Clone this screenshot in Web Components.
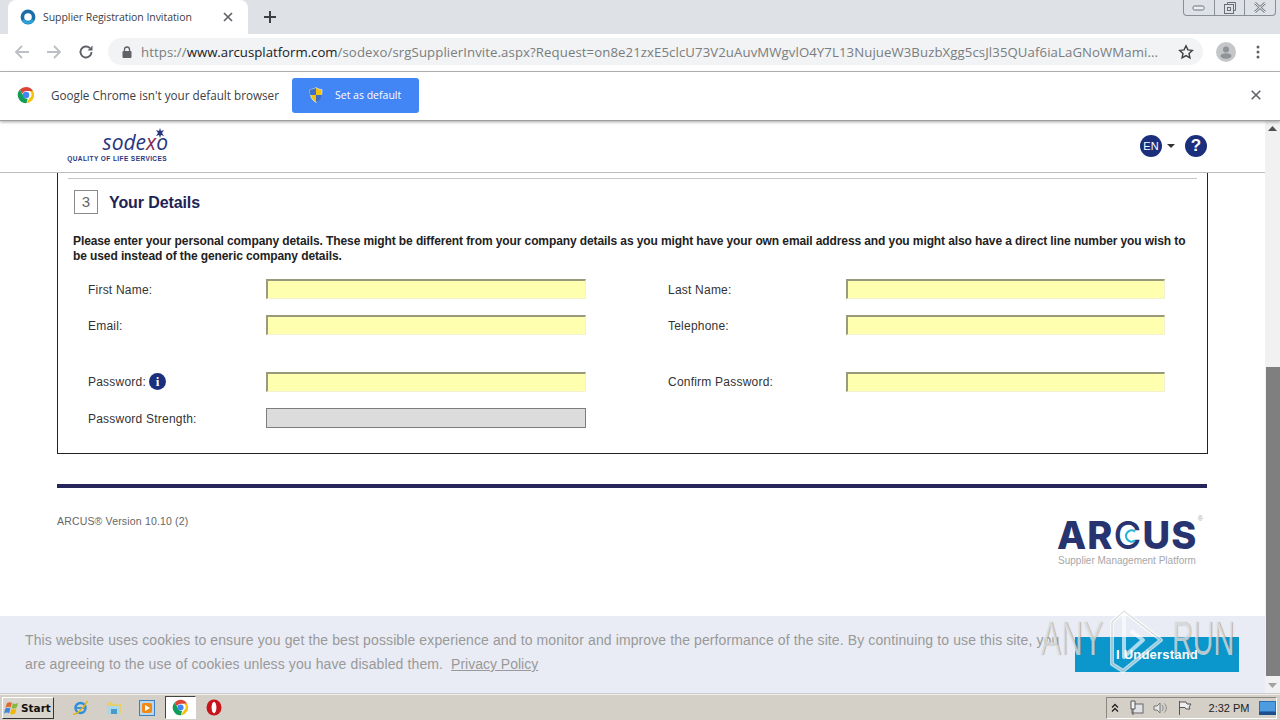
<!DOCTYPE html>
<html lang="en">
<head>
<meta charset="utf-8">
<title>Supplier Registration Invitation</title>
<style>
  html, body { margin: 0; height: 720px; overflow: hidden; background: #fff; }
  body { display: flex; flex-direction: column; font-family: "Liberation Sans", Arial, sans-serif; }
</style>
</head>
<body>
<chrome-tabs></chrome-tabs>
<chrome-toolbar></chrome-toolbar>
<chrome-infobar></chrome-infobar>
<page-view>
  <site-header></site-header>
  <details-panel>
    <form-field label="First Name:"></form-field>
    <form-field label="Last Name:"></form-field>
    <form-field label="Email:"></form-field>
    <form-field label="Telephone:"></form-field>
    <form-field label="Password:" info class="gap"></form-field>
    <form-field label="Confirm Password:" class="gap"></form-field>
    <form-field label="Password Strength:" meter></form-field>
  </details-panel>
  <site-footer></site-footer>
  <cookie-bar></cookie-bar>
</page-view>
<win-taskbar></win-taskbar>

<script>
const chromeLogo = `<svg viewBox="0 0 20 20" width="18" height="18">
  <path d="M10 1a9 9 0 0 1 7.8 4.5H10a4.5 4.5 0 0 0-4.2 3L3.2 4A9 9 0 0 1 10 1z" fill="#db4437"/>
  <path d="M17.8 5.5A9 9 0 0 1 10.6 19l3.3-5.6a4.5 4.5 0 0 0 0-7.9z" fill="#f4c20d"/>
  <path d="M10.6 19A9 9 0 0 1 3.2 4l3.4 6.2a4.5 4.5 0 0 0 5.2 3.9z" fill="#0f9d58"/>
  <circle cx="10" cy="10" r="3.6" fill="#4285f4"/></svg>`;

class ChromeTabs extends HTMLElement {
  constructor() {
    super();
    this.attachShadow({ mode: 'open' });
    this.shadowRoot.innerHTML = `
      <style>
        :host { display: flex; align-items: flex-end; height: 34px; background: #dee1e6; flex: none; padding-left: 8px; position: relative; }
        .tab { display: flex; align-items: center; width: 240px; height: 34px; box-sizing: border-box; background: #fff; border-radius: 8px 8px 0 0; padding: 0 15px 1px 12px; font: 10.5px "Open Sans", sans-serif; color: #3c4043; }
        .tab span { flex: 1; margin-left: 7px; letter-spacing: -.06px; }
        .new { width: 44px; display: flex; justify-content: center; align-self: center; }
        .win { position: absolute; right: 4px; top: 0; display: flex; height: 16px; box-sizing: border-box; width: 93px; border: 1px solid #8a8f96; border-top: 0; border-radius: 0 0 4px 4px; }
        .win i { flex: 1; display: flex; align-items: center; justify-content: center; border-left: 1px solid #8a8f96; }
        .win i:first-child { border-left: 0; }
      </style>
      <div class="tab">
        <svg width="16" height="16" viewBox="0 0 16 16"><circle cx="8" cy="8" r="5.6" fill="none" stroke="#1a6ea8" stroke-width="3.6"/><path d="M3 11a6 6 0 0 0 10 0" fill="none" stroke="#29a5d8" stroke-width="2.4"/></svg>
        <span>Supplier Registration Invitation</span>
        <svg width="10" height="10" viewBox="0 0 10 10"><path d="M1 1l8 8M9 1l-8 8" stroke="#5f6368" stroke-width="1.7"/></svg>
      </div>
      <div class="new"><svg width="14" height="14" viewBox="0 0 14 14"><path d="M7 1v12M1 7h12" stroke="#3c4043" stroke-width="2"/></svg></div>
      <div class="win">
        <i><svg width="14" height="8" viewBox="0 0 14 8"><rect x="1" y="2" width="11" height="4" rx="1.5" fill="#eceef1" stroke="#6c7076"/></svg></i>
        <i><svg width="14" height="14" viewBox="0 0 14 14"><path d="M4.5 3.5v-2h8v8h-2" fill="none" stroke="#6c7076"/><rect x="1.5" y="3.5" width="9" height="9" fill="none" stroke="#6c7076"/><rect x="4.5" y="6.5" width="3" height="3" fill="none" stroke="#6c7076"/></svg></i>
        <i><svg width="14" height="12" viewBox="0 0 14 12"><path d="M2 1l10 9M12 1L2 10" stroke="#7b8086" stroke-width="2.5"/><path d="M2 1l10 9M12 1L2 10" stroke="#eceef1" stroke-width="1"/></svg></i>
      </div>`;
  }
}

class ChromeToolbar extends HTMLElement {
  constructor() {
    super();
    this.attachShadow({ mode: 'open' });
    this.shadowRoot.innerHTML = `
      <style>
        :host { display: flex; align-items: center; height: 38px; box-sizing: border-box; flex: none; background: #fff; border-bottom: 1px solid #b8b9ba; padding: 0 0 2px 14px; }
        .nav { display: flex; gap: 16px; align-items: center; width: 94px; }
        .omni { display: flex; align-items: center; width: 1095px; height: 27px; box-sizing: border-box; background: #f1f3f4; border-radius: 14px; padding: 0 9px 0 14px; font: 13.2px "Open Sans", sans-serif; color: #7a7d80; white-space: nowrap; }
        .url { flex: 1; min-width: 0; margin: 0 19px 0 9px; overflow: hidden; letter-spacing: .09px; }
        .url b { font-weight: 400; color: #202124; letter-spacing: 0; }
        .tools { display: flex; align-items: center; margin-left: 13px; gap: 20px; }
        .avatar { width: 20px; height: 20px; border-radius: 50%; background: #c4c6c8; display: flex; }
      </style>
      <div class="nav">
        <svg width="16" height="16" viewBox="0 0 16 16"><path d="M15 8H2M8 2L2 8l6 6" fill="none" stroke="#bcbfc3" stroke-width="1.8"/></svg>
        <svg width="16" height="16" viewBox="0 0 16 16"><path d="M1 8h13M8 2l6 6-6 6" fill="none" stroke="#bcbfc3" stroke-width="1.8"/></svg>
        <svg width="16" height="16" viewBox="0 0 16 16"><path d="M13.5 8A5.5 5.5 0 1 1 11.8 4" fill="none" stroke="#5f6368" stroke-width="1.9"/><path d="M14.5 1.5v5h-5z" fill="#5f6368"/></svg>
      </div>
      <div class="omni">
        <svg width="10" height="12" viewBox="0 0 10 12"><path d="M2.5 5V3.5a2.5 2.5 0 0 1 5 0V5" fill="none" stroke="#5f6368" stroke-width="1.3"/><rect x=".5" y="5" width="9" height="7" rx="1" fill="#5f6368"/></svg>
        <div class="url">https://<b>www.arcusplatform.com</b>/sodexo/srgSupplierInvite.aspx?Request=on8e21zxE5clcU73V2uAuvMWgvlO4Y7L13NujueW3BuzbXgg5csJl35QUaf6iaLaGNoWMami...</div>
        <svg width="16" height="16" viewBox="0 0 16 16"><path d="M8 1.8l1.9 4.1 4.4.5-3.3 3 .9 4.4L8 11.6l-3.9 2.2.9-4.4-3.3-3 4.4-.5z" fill="none" stroke="#3c4043" stroke-width="1.4"/></svg>
      </div>
      <div class="tools">
        <div class="avatar"><svg width="20" height="20" viewBox="0 0 20 20"><circle cx="10" cy="7.5" r="3" fill="#8f9296"/><ellipse cx="10" cy="14" rx="5.5" ry="2.8" fill="#8f9296"/></svg></div>
        <svg width="4" height="14" viewBox="0 0 4 14"><circle cx="2" cy="2" r="1.5" fill="#5f6368"/><circle cx="2" cy="7" r="1.5" fill="#5f6368"/><circle cx="2" cy="12" r="1.5" fill="#5f6368"/></svg>
      </div>`;
  }
}

class ChromeInfobar extends HTMLElement {
  constructor() {
    super();
    this.attachShadow({ mode: 'open' });
    this.shadowRoot.innerHTML = `
      <style>
        :host { display: flex; align-items: center; height: 49px; box-sizing: border-box; flex: none; background: #fff; padding: 0 19px 2px 17px; font: 11.7px "Open Sans", sans-serif; color: #3c4043; border-bottom: 1px solid #9e9e9e; box-shadow: 0 1px 3px rgba(0,0,0,.35); position: relative; z-index: 2; }
        .msg { margin-left: 16px; width: 241px; white-space: nowrap; }
        button { display: flex; align-items: center; width: 127px; height: 35px; background: #4285f4; border: 0; border-radius: 3px; color: #fff; font: 10.5px "Open Sans", sans-serif; padding: 0 0 0 17px; }
        button span { margin-left: 12px; }
        .close { margin-left: auto; display: flex; }
      </style>
      ${chromeLogo}
      <div class="msg">Google Chrome isn't your default browser</div>
      <button>
        <svg width="14" height="16" viewBox="0 0 14 16"><path d="M7 .5c2 1.5 4 2 6 2 0 6-1 10-6 13-5-3-6-7-6-13 2 0 4-.5 6-2z" fill="#f4c20d" stroke="#dfe6f2" stroke-width=".8"/><path d="M7 1v7h6c-.3 3-2 6-6 7.500V8H1.200C1 6 1 4 1 2.500 3 2.500 5 2 7 1z" fill="#3f6fc4"/></svg>
        <span>Set as default</span>
      </button>
      <svg class="close" width="10" height="10" viewBox="0 0 10 10"><path d="M.7.7l8.6 8.6M9.3.7L.7 9.300" stroke="#5f6368" stroke-width="1.6"/></svg>`;
  }
}

class PageView extends HTMLElement {
  constructor() {
    super();
    this.attachShadow({ mode: 'open' });
    this.shadowRoot.innerHTML = `
      <style>
        :host { display: flex; height: 573px; flex: none; position: relative; border-bottom: 1px solid #c9cbce; box-sizing: border-box; overflow: hidden; }
        .content { flex: 1; display: flex; flex-direction: column; min-width: 0; background: #fff; }
        .bar { width: 15px; flex: none; background: #f1f1f1; display: flex; flex-direction: column; align-items: center; justify-content: space-between; padding: 5px 0; box-sizing: border-box; position: relative; }
        .thumb { position: absolute; left: 1px; right: 0; top: 246px; bottom: 17px; background: #7f7f7f; }
      </style>
      <div class="content"><slot></slot></div>
      <div class="bar">
        <svg width="9" height="5" viewBox="0 0 9 5"><path d="M4.5 0L9 5H0z" fill="#505050"/></svg>
        <div class="thumb"></div>
        <svg width="9" height="5" viewBox="0 0 9 5"><path d="M4.5 5L9 0H0z" fill="#a3a3a3"/></svg>
      </div>`;
  }
}

class SiteHeader extends HTMLElement {
  constructor() {
    super();
    this.attachShadow({ mode: 'open' });
    this.shadowRoot.innerHTML = `
      <style>
        :host { display: flex; align-items: center; height: 52px; box-sizing: border-box; flex: none; border-bottom: 1px solid #bdbdbd; padding: 0 58px 0 67px; background: #fff; }
        .logo { width: 101px; height: 36px; display: flex; flex-direction: column; align-items: flex-end; position: relative; margin-top: -1px; }
        .word { font: italic 500 21px/19px "Open Sans", sans-serif; color: #28367f; margin-top: 5px; }
        .tag { font: 700 6.5px/9px "Liberation Sans", sans-serif; color: #28367f; letter-spacing: .42px; white-space: nowrap; margin: 2px 1px 0 0; }
        .star { position: absolute; right: 3px; top: 0; }
        .x { color: #8a2a50; }
        .right { margin-left: auto; display: flex; align-items: center; margin-top: -1px; }
        .en { width: 22px; height: 22px; border-radius: 50%; background: #1b2f7c; color: #fff; font: 11px/22px "Liberation Sans", sans-serif; text-align: center; }
        .caret { width: 0; height: 0; border: 4px solid transparent; border-top: 4px solid #333; border-bottom: 0; margin: 0 10px 0 5px; }
        .help { width: 22px; height: 22px; border-radius: 50%; background: #1b2f7c; color: #fff; font: 700 17px/22px "Liberation Sans", sans-serif; text-align: center; }
      </style>
      <div class="logo">
        <svg class="star" width="10" height="10" viewBox="0 0 10 10"><path d="M5 0l1 3 3-1-2 3 2 3-3-1-1 3-1-3-3 1 2-3-2-3 3 1z" fill="#28367f"/></svg>
        <div class="word">sode<span class="x">x</span>o</div>
        <div class="tag">QUALITY OF LIFE SERVICES</div>
      </div>
      <div class="right">
        <div class="en">EN</div><div class="caret"></div><div class="help">?</div>
      </div>`;
  }
}

class DetailsPanel extends HTMLElement {
  constructor() {
    super();
    this.attachShadow({ mode: 'open' });
    this.shadowRoot.innerHTML = `
      <style>
        :host { display: block; box-sizing: border-box; height: 281px; margin: 0 57px 0 57px; border: 1px solid #222; border-top: 0; padding: 5px 10px 0 10px; flex: none; color: #222; }
        .rule { height: 1px; background: #c5c5c5; }
        .head { display: flex; align-items: center; margin: 11px 0 0 6px; }
        .num { width: 24px; height: 24px; box-sizing: border-box; border: 1px solid #8b8b8b; font: 15px/22px "Liberation Sans", sans-serif; text-align: center; color: #666; }
        h2 { margin: 1px 0 0 11px; font: 700 16px "Liberation Sans", sans-serif; color: #1e2355; letter-spacing: -.1px; }
        p { margin: 20px 0 0 5px; font: 700 12px/15px "Liberation Sans", sans-serif; width: 1125px; color: #222; letter-spacing: -.1px; }
        .grid { display: grid; grid-template-columns: 498px 497px; column-gap: 82px; margin: 15px 0 0 20px; row-gap: 16px; }
      </style>
      <div class="rule"></div>
      <div class="head"><div class="num">3</div><h2>Your Details</h2></div>
      <p>Please enter your personal company details. These might be different from your company details as you might have your own email address and you might also have a direct line number you wish to<br>be used instead of the generic company details.</p>
      <div class="grid"><slot></slot></div>`;
  }
}

class FormField extends HTMLElement {
  constructor() {
    super();
    this.attachShadow({ mode: 'open' });
  }

  connectedCallback() {
    const info = this.hasAttribute('info') ? '<span class="info">i</span>' : '';
    const meter = this.hasAttribute('meter') ? ' meter' : '';
    this.shadowRoot.innerHTML = `
      <style>
        :host { display: grid; grid-template-columns: 178px 1fr; align-items: center; height: 20px; font: 12px "Liberation Sans", sans-serif; color: #333; letter-spacing: .22px; }
        :host(.gap) { margin-top: 21px; }
        label { display: flex; align-items: center; padding-top: 2px; }
        :host(.gap) label { padding-top: 0; }
        .info { width: 17px; height: 17px; border-radius: 50%; background: #1b2f7c; color: #fff; font: 700 13px/17px "Liberation Serif", serif; text-align: center; margin: -2px 0 0 3px; letter-spacing: 0; }
        .box { height: 20px; box-sizing: border-box; background: #ffffb0; border-style: solid; border-width: 2px 1px 1px 2px; border-color: #999a7c #f2f2d0 #f2f2d0 #9a9a80; }
        .box.meter { background: #dcdcdc; border: 1px solid #7d7d7d; }
      </style>
      <label>${this.getAttribute('label')}${info}</label>
      <div class="box${meter}"></div>`;
  }
}

class SiteFooter extends HTMLElement {
  constructor() {
    super();
    this.attachShadow({ mode: 'open' });
    this.shadowRoot.innerHTML = `
      <style>
        :host { display: flex; flex-direction: column; box-sizing: border-box; margin: 30px 58px 0 57px; border-top: 4px solid #26265a; flex: none; }
        .row { display: flex; justify-content: space-between; align-items: flex-start; }
        .ver { font: 10.5px "Liberation Sans", sans-serif; color: #666; margin-top: 27px; letter-spacing: .17px; }
        .logo { margin: 30px 10px 0 0; width: 140px; position: relative; text-align: center; }
        .name { font: 800 38px/35px "Inter", sans-serif; color: #27346f; letter-spacing: 1.1px; white-space: nowrap; }
        .c { font-weight: 500; position: relative; display: inline-block; }
        .c svg { position: absolute; left: 9px; top: 11px; }
        .sub { font: 10px/13px "Liberation Sans", sans-serif; color: #a5a7aa; white-space: nowrap; margin-top: 1px; }
        .reg { position: absolute; right: -6px; top: -3px; font: 7px "Liberation Sans", sans-serif; color: #aaa; }
      </style>
      <div class="row">
        <div class="ver">ARCUS® Version 10.10 (2)</div>
        <div class="logo">
          <div class="name">AR<span class="c">C<svg width="14" height="14" viewBox="0 0 14 14"><path d="M12 2.5a5.6 5.6 0 1 0 0 9" fill="none" stroke="#29b6d8" stroke-width="2.2"/></svg></span>US</div>
          <span class="reg">®</span>
          <div class="sub">Supplier Management Platform</div>
        </div>
      </div>`;
  }
}

class CookieBar extends HTMLElement {
  constructor() {
    super();
    this.attachShadow({ mode: 'open' });
    this.shadowRoot.innerHTML = `
      <style>
        :host { position: absolute; left: 0; right: 15px; bottom: 0; height: 77px; background: #e9ecf4; box-sizing: border-box; padding: 12px 200px 0 25px; display: flex; font: 14px/24px "Liberation Sans", sans-serif; color: #999; }
        .txt { flex: 1; letter-spacing: .11px; }
        a { color: #999; text-decoration: underline; margin-left: 4px; letter-spacing: 0; }
        button { position: absolute; left: 1075px; top: 21px; width: 164px; height: 35px; border: 0; background: #0b96cc; color: #fff; font: 700 13px "Liberation Sans", sans-serif; letter-spacing: .2px; }
        .mark { position: absolute; left: 1040px; top: -8px; width: 192px; height: 66px; display: flex; align-items: center; font: 48px/48px "Liberation Sans", sans-serif; color: rgba(255,255,255,.6); text-shadow: 1px 0 1px rgba(110,110,110,.6); pointer-events: none; }
        .mark svg { flex: none; margin: 0 8px 0 8px; }
        .mark span { display: block; width: 62px; margin-top: -4px; white-space: nowrap; transform: scaleX(.6); transform-origin: left center; }
        .mark span.any { transform: scaleX(.64); }
      </style>
      <div class="txt">This website uses cookies to ensure you get the best possible experience and to monitor and improve the performance of the site. By continuing to use this site, you are agreeing to the use of cookies unless you have disabled them. <a>Privacy Policy</a></div>
      <button>I Understand</button>
      <div class="mark"><span class="any">ANY</span><svg width="54" height="66" viewBox="0 0 54 66"><path d="M14 3l37 29-38 31L2 56V14zM14 3v46l19-17-12-9" fill="none" stroke="rgba(255,255,255,.65)" stroke-width="4" stroke-linejoin="round"/><path d="M14 3l37 29-38 31L2 56V14z" fill="none" stroke="rgba(110,110,110,.3)" stroke-width="1"/></svg><span>RUN</span></div>`;
  }
}

class WinTaskbar extends HTMLElement {
  constructor() {
    super();
    this.attachShadow({ mode: 'open' });
    this.shadowRoot.innerHTML = `
      <style>
        :host { display: flex; align-items: center; height: 27px; box-sizing: border-box; flex: none; background: #d4d0c8; border-top: 1px solid #efeee9; padding: 0 3px 1px 2px; }
        .start { display: flex; align-items: center; height: 22px; width: 52px; box-sizing: border-box; background: #d8d5cd; border: 1px solid; border-color: #fff #333 #333 #fff; font: 700 10.5px "DejaVu Sans", sans-serif; color: #111; gap: 1px; padding-left: 1px; }
        .apps { display: grid; grid-auto-flow: column; grid-auto-columns: 33.5px; justify-items: center; align-items: center; margin-left: 9.5px; }
        .apps div { display: flex; }
        .apps .active { padding: 2px 6px; background: #fff; border: 1px solid; border-color: #444 #fff #fff #444; }
        .tray { margin-left: auto; display: flex; align-items: center; height: 22px; width: 171px; box-sizing: border-box; border: 1px solid; border-color: #8a8880 #fff #fff #8a8880; padding: 0 0 0 4px; gap: 8.5px; font: 11px "Liberation Sans", sans-serif; color: #222; }
        .clock { margin-left: auto; margin-right: 1px; white-space: nowrap; }
      </style>
      <div class="start">
        <svg width="16" height="16" viewBox="0 0 17 16"><path d="M3 3c1.5-1.5 3.5-1.5 5.5-.5L7 7.5C5 6.5 3.5 6.5 1.5 8z" fill="#e4672e"/><path d="M9.5 3c2 1 3.5 1 5.5-.5L13.5 7.5c-2 1.5-3.5 1.5-5.5.5z" fill="#86b83e"/><path d="M1.2 9c2-1.5 3.5-1.5 5.5-.5L5.5 13.5c-2-1-3.500-1-5.500.5z" fill="#3d86d8"/><path d="M7.7 9c2 1 3.5 1 5.500-.5L12 13.5c-2 1.5-3.5 1.5-5.5.5z" fill="#f2b705"/></svg>
        Start
      </div>
      <div class="apps">
        <div><svg width="17" height="17" viewBox="0 0 17 17"><circle cx="8.5" cy="9" r="5" fill="none" stroke="#2d8fd8" stroke-width="2.4"/><path d="M4.5 9h8" stroke="#2d8fd8" stroke-width="1.8"/><path d="M1 15c2 1.5 10-4 14.5-13" fill="none" stroke="#e7b416" stroke-width="1.5"/></svg></div>
        <div><svg width="16" height="16" viewBox="0 0 16 16"><path d="M1 2h5l1 2h8v10H1z" fill="#e6cf70"/><path d="M2 6h12v8H2z" fill="#a9d8ef"/><path d="M5 9h6v5H5z" fill="#4b9ac8"/></svg></div>
        <div><svg width="16" height="16" viewBox="0 0 16 16"><rect x=".5" y=".5" width="15" height="15" fill="#bcd6ee" stroke="#3d7fc4"/><rect x="3" y="3" width="10" height="10" rx="2" fill="#ef8a17"/><path d="M6 5l5 3-5 3z" fill="#fff"/></svg></div>
        <div class="active">${chromeLogo.replace('width="18" height="18"', 'width="17" height="17"')}</div>
        <div><svg width="16" height="17" viewBox="0 0 16 17"><ellipse cx="8" cy="8.5" rx="7.5" ry="8" fill="#c8151b"/><ellipse cx="8" cy="8.5" rx="2.4" ry="5.8" fill="#fff"/></svg></div>
      </div>
      <div class="tray">
        <svg width="8" height="10" viewBox="0 0 8 10"><path d="M1 4.5l3-3 3 3M1 8.5l3-3 3 3" fill="none" stroke="#222" stroke-width="1.3"/></svg>
        <svg width="16" height="16" viewBox="0 0 16 16"><rect x="4" y="4" width="11" height="9" fill="#dfe3e6" stroke="#666"/><path d="M3 1v8h4V1zM5 9v6" fill="#f2f2f2" stroke="#555"/></svg>
        <svg width="16" height="14" viewBox="0 0 16 14"><path d="M2 5h3l3-3v10l-3-3H2z" fill="#e8e8e8" stroke="#777"/><path d="M10 4c1.5 2 1.5 4 0 6M12.5 2.5c2.5 3 2.5 6 0 9" fill="none" stroke="#8a8a8a"/></svg>
        <svg width="16" height="16" viewBox="0 0 16 16"><path d="M2.5 1v14M3 2h6l1 2h4l-2 3 1 2H9L8 7.5H3" fill="#efefef" stroke="#555"/></svg>
        <span class="clock">2:32 PM</span>
        <svg width="17" height="14" viewBox="0 0 17 14"><rect width="17" height="14" fill="#2a6fb8"/><rect x="1" y="1" width="15" height="9" fill="#4f9be0"/><rect y="11" width="17" height="3" fill="#1c4f8c"/></svg>
      </div>`;
  }
}

customElements.define('chrome-tabs', ChromeTabs);
customElements.define('chrome-toolbar', ChromeToolbar);
customElements.define('chrome-infobar', ChromeInfobar);
customElements.define('page-view', PageView);
customElements.define('site-header', SiteHeader);
customElements.define('details-panel', DetailsPanel);
customElements.define('form-field', FormField);
customElements.define('site-footer', SiteFooter);
customElements.define('cookie-bar', CookieBar);
customElements.define('win-taskbar', WinTaskbar);
</script>
</body>
</html>
